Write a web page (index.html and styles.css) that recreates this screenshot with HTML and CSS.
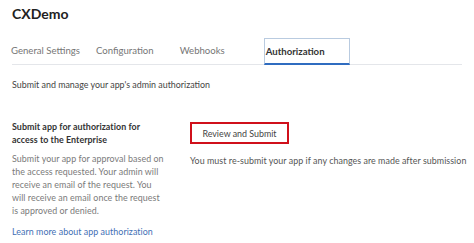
FILE: index.html
```html
<!DOCTYPE html>
<html lang="en">
<head>
    <meta charset="UTF-8">
    <title>CXDemo - Authorization</title>
    <link rel="stylesheet" href="styles.css">
</head>
<body>
    <div class="page">
        <h1 class="app-name">CXDemo</h1>

        <div class="tabs">
            <div class="tab tab-general">General Settings</div>
            <div class="tab tab-config">Configuration</div>
            <div class="tab tab-hooks">Webhooks</div>
            <div class="tab tab-active">Authorization</div>
        </div>

        <p class="intro">Submit and manage your app's admin authorization</p>

        <div class="section">
            <div class="section-info">
                <div class="section-title">Submit app for authorization for access to the Enterprise</div>
                <div class="section-desc">Submit your app for approval based on the access requested. Your admin will receive an email of the request. You will receive an email once the request is approved or denied.</div>
                <a class="section-link" href="#">Learn more about app authorization</a>
            </div>
            <div class="section-action">
                <button class="btn-review">Review and Submit</button>
                <div class="note">You must re-submit your app if any changes are made after submission</div>
            </div>
        </div>
    </div>
</body>
</html>
```

FILE: styles.css
```css
* {
    margin: 0;
    padding: 0;
    box-sizing: border-box;
}

body {
    font-family: Lato, "Open Sans", sans-serif;
    background: #fff;
    color: #4a4a4a;
}

.page {
    padding: 5px 8px 0 12px;
}

.app-name {
    font-size: 14px;
    font-weight: 700;
    color: #222;
    line-height: 18px;
}

.tabs {
    display: flex;
    align-items: flex-end;
    margin-top: 15px;
    margin-right: 4px;
    border-bottom: 1px solid #e4e6ea;
    height: 27px;
}

.tab {
    font-size: 9.6px;
    color: #767676;
    padding-bottom: 8px;
}

.tab-general {
    margin-left: -1px;
}

.tab-config {
    margin-left: 16px;
}

.tab-hooks {
    margin-left: 26px;
}

.tab-active {
    margin-left: 39px;
    width: 86px;
    height: 27px;
    padding: 7px 0 0 1px;
    margin-bottom: -1px;
    border: 1px solid #b9cbe0;
    border-bottom: 2px solid #2f6cc0;
    font-weight: 700;
    color: #333;
}

.intro {
    font-size: 8.9px;
    color: #444;
    margin-top: 13px;
    line-height: 13px;
}

.section {
    display: flex;
    margin-top: 30px;
    font-size: 8.9px;
    letter-spacing: 0.05px;
}

.section-info {
    flex: 0 0 178px;
    line-height: 12.5px;
}

.section-title {
    font-weight: 700;
    color: #333;
    width: 140px;
}

.section-desc {
    margin-top: 6px;
    color: #7a7a7a;
    line-height: 13px;
    width: 152px;
}

.section-link {
    display: block;
    margin-top: 9px;
    color: #3f6fb5;
    text-decoration: none;
}

.section-action {
    flex: 1;
}

.btn-review {
    font-family: inherit;
    font-size: 8.9px;
    color: #444;
    background: #fff;
    border: 2px solid #d0101b;
    width: 99px;
    height: 22px;
    margin-top: 1px;
}

.note {
    margin-top: 10px;
    color: #555;
    line-height: 13px;
    white-space: nowrap;
}
```
